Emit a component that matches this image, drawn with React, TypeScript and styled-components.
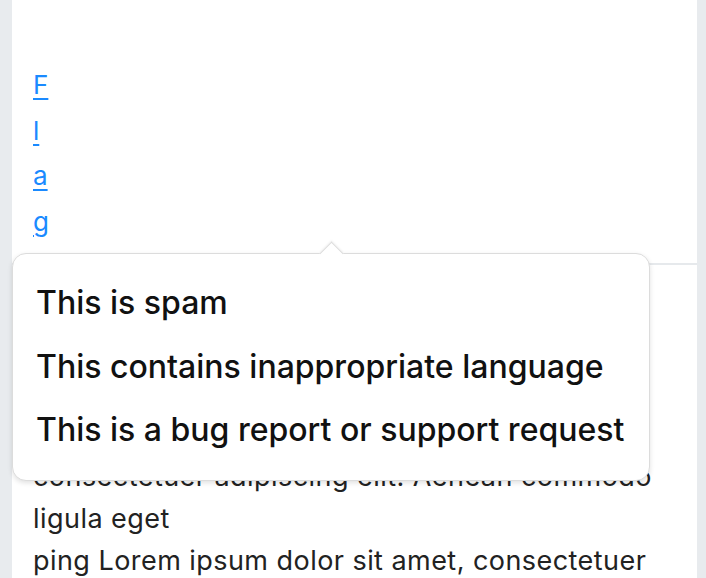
import React from "react";
import styled, { createGlobalStyle } from "styled-components";

const Global = createGlobalStyle`
  html, body {
    margin: 0;
    padding: 0;
    background: #e8ebee;
    font-family: Inter, "Noto Sans", sans-serif;
  }
  #root {
    min-height: 100vh;
  }
`;

const Page = styled.div`
  display: flex;
  padding: 0 9px 0 12px;
  min-height: 100vh;
  overflow: hidden;
`;

const Card = styled.main`
  position: relative;
  flex: 1;
  background: #ffffff;
  display: flex;
  flex-direction: column;
`;

const Header = styled.div`
  padding: 62px 21px 0;
  height: 201px;
`;

const FlagLink = styled.a`
  display: inline-block;
  width: 1px;
  word-break: break-all;
  font-size: 26px;
  line-height: 45.5px;
  color: #1a8aff;
  text-decoration: underline;
  text-underline-offset: 4px;
  text-decoration-thickness: 2px;
  cursor: pointer;
`;

const Divider = styled.hr`
  margin: 0;
  border: 0;
  border-top: 2px solid #e6e9ec;
`;

const Body = styled.div`
  padding: 23px 21px 0;
  font-size: 27px;
  letter-spacing: 0.45px;
  line-height: 42px;
  color: #222222;
`;

const Popover = styled.div`
  position: absolute;
  left: 0;
  top: 253px;
  width: 638px;
  box-sizing: border-box;
  padding: 17px 20px 18px 23px;
  background: #ffffff;
  border: 1px solid #dcdcdc;
  border-radius: 14px;
  box-shadow: 0 2px 5px rgba(0, 0, 0, 0.12);
  display: flex;
  flex-direction: column;
`;

const Arrow = styled.span`
  position: absolute;
  top: -9px;
  left: 50%;
  width: 16px;
  height: 16px;
  margin-left: -8px;
  background: #ffffff;
  border-left: 1px solid #dcdcdc;
  border-top: 1px solid #dcdcdc;
  transform: rotate(45deg);
  box-shadow: -1px -1px 2px rgba(0, 0, 0, 0.05);
`;

const Item = styled.button`
  all: unset;
  display: block;
  padding: 12px 0 11px;
  font-family: Inter, "Noto Sans", sans-serif;
  font-size: 32px;
  font-weight: 500;
  line-height: 40.5px;
  white-space: nowrap;
  color: #111111;
  cursor: pointer;
`;

const hidden = [
  "Lorem ipsum dolor sit amet, consectetuer",
  "adipiscing elit. Aenean commodo ligula eget",
  "ping Lorem ipsum dolor sit amet, consectetuer",
  "ping Lorem ipsum dolor sit amet,",
];

export default function App() {
  return (
    <>
      <Global />
      <Page>
        <Card>
          <Header>
            <FlagLink href="#">Flag</FlagLink>
          </Header>
          <Divider />
          <Body>
            {hidden.map((l, i) => (
              <React.Fragment key={i}>
                {l}
                <br />
              </React.Fragment>
            ))}
            consectetuer adipiscing elit. Aenean commodo ligula eget
            <br />
            ping Lorem ipsum dolor sit amet, consectetuer adipiscing elit.
            Aenean commodo ligula eget
          </Body>
          <Popover role="menu">
            <Arrow />
            <Item>This is spam</Item>
            <Item>This contains inappropriate language</Item>
            <Item>This is a bug report or support request</Item>
          </Popover>
        </Card>
      </Page>
    </>
  );
}
